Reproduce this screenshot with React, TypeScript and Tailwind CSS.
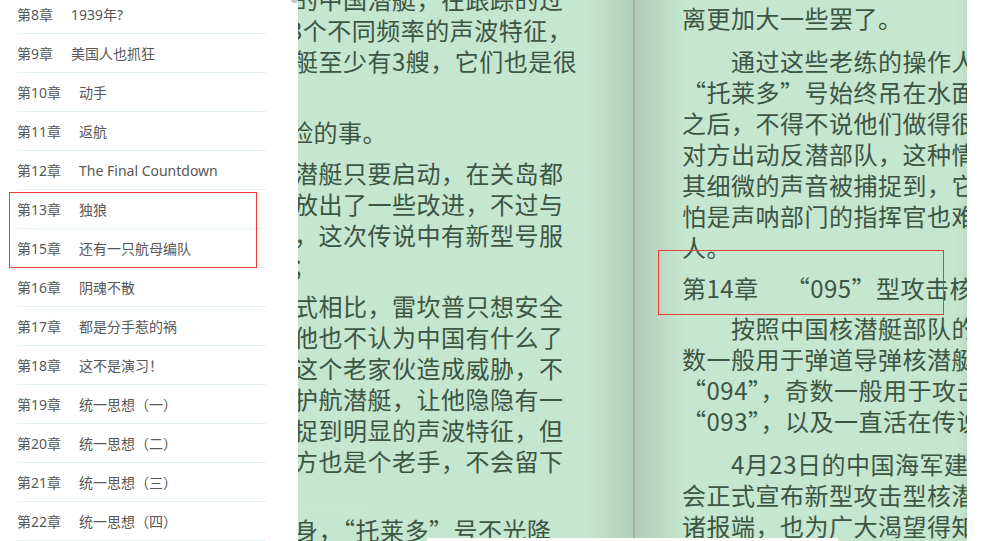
import React from 'react';

const chapters: [string, string][] = [
  ['第8章', '1939年?'],
  ['第9章', '美国人也抓狂'],
  ['第10章', '动手'],
  ['第11章', '返航'],
  ['第12章', 'The Final Countdown'],
  ['第13章', '独狼'],
  ['第15章', '还有一只航母编队'],
  ['第16章', '阴魂不散'],
  ['第17章', '都是分手惹的祸'],
  ['第18章', '这不是演习！'],
  ['第19章', '统一思想（一）'],
  ['第20章', '统一思想（二）'],
  ['第21章', '统一思想（三）'],
  ['第22章', '统一思想（四）'],
];

function Line({ children, className = '' }: { children: React.ReactNode; className?: string }) {
  return <div className={`h-[31px] leading-[31px] whitespace-nowrap ${className}`}>{children}</div>;
}

function Toc() {
  return (
    <aside className="relative w-[298px] shrink-0 h-full bg-white overflow-hidden font-['Noto_Sans','Noto_Sans_CJK_SC',sans-serif]">
      {/* scrollbar thumb end */}
      <div className="absolute right-0 top-[-20px] w-[7px] h-[23px] rounded-full bg-[#c4c4c4]" />
      <ul className="ml-[17px] w-[249px] mt-[-5px]">
        {chapters.map(([no, title]) => (
          <li
            key={no}
            className="h-[39px] flex items-center border-b border-[#e2f2f2] text-[14px] text-[#585858]"
          >
            <span>{no}</span>
            <span className="ml-[18px]">{title}</span>
          </li>
        ))}
      </ul>
    </aside>
  );
}

function LeftPage() {
  return (
    <section className="w-[335px] shrink-0 h-full overflow-hidden bg-linear-to-r from-[#c5e6cf] from-86% to-[#b4cebc] text-[24px] tracking-[0.5px] text-[#3d5543]">
      <Line className="mt-[-17px] ml-[-4px]">的中国潜艇，在跟踪的过</Line>
      <Line className="ml-[-9px]">3个不同频率的声波特征，</Line>
      <Line className="ml-[-4px]">艇至少有3艘，它们也是很</Line>

      <Line className="mt-[40px] ml-[-9px]">险的事。</Line>

      <Line className="mt-[10px] ml-[-4px]">潜艇只要启动，在关岛都</Line>
      <Line className="ml-[-4px]">放出了一些改进，不过与</Line>
      <Line className="ml-[-4px]">，这次传说中有新型号服</Line>
      <Line className="ml-[-6px]">；</Line>

      <Line className="mt-[9px] ml-[-4px]">式相比，雷坎普只想安全</Line>
      <Line className="ml-[-4px]">他也不认为中国有什么了</Line>
      <Line className="ml-[-4px]">这个老家伙造成威胁，不</Line>
      <Line className="ml-[-4px]">护航潜艇，让他隐隐有一</Line>
      <Line className="ml-[-4px]">捉到明显的声波特征，但</Line>
      <Line className="ml-[-4px]">方也是个老手，不会留下</Line>

      <Line className="mt-[38px] ml-[-4px]">身，“托莱多”号不光降</Line>
    </section>
  );
}

function RightPage() {
  return (
    <section className="w-[332px] shrink-0 h-full overflow-hidden pl-[47px] pt-[2px] bg-linear-to-r from-[#b3cbb9] to-[#c5e6cf] to-15% shadow-[inset_-10px_0_8px_-8px_rgba(60,90,70,0.12)] text-[24px] tracking-[0.5px] text-[#3d5543]">
      <Line>离更加大一些罢了。</Line>

      <div className="mt-[12px]">
        <Line className="pl-[49px]">通过这些老练的操作人员，</Line>
        <Line>“托莱多”号始终吊在水面</Line>
        <Line>之后，不得不说他们做得很</Line>
        <Line>对方出动反潜部队，这种情况</Line>
        <Line>其细微的声音被捕捉到，它</Line>
        <Line>怕是声呐部门的指挥官也难</Line>
        <Line>人。</Line>
      </div>

      <Line className="mt-[10px]">
        第14章<span className="ml-[27px]">“095”型攻击核潜艇</span>
      </Line>

      <div className="mt-[9px]">
        <Line className="pl-[49px]">按照中国核潜艇部队的</Line>
        <Line>数一般用于弹道导弹核潜艇</Line>
        <Line>“094”，奇数一般用于攻击</Line>
        <Line>“093”，以及一直活在传说</Line>
      </div>

      <div className="mt-[12px]">
        <Line className="pl-[49px]">4月23日的中国海军建军</Line>
        <Line>会正式宣布新型攻击型核潜艇</Line>
        <Line>诸报端，也为广大渴望得知</Line>
      </div>
    </section>
  );
}

export default function App() {
  return (
    <div className="relative w-[982px] h-[541px] overflow-hidden bg-white font-['Noto_Sans_CJK_SC',sans-serif]">
      <div className="flex h-full">
        <Toc />
        <LeftPage />
        <div className="w-[2px] shrink-0 h-full bg-[#a9abaa]" />
        <RightPage />
        <div className="flex-1 h-full bg-white" />
      </div>

      {/* bottom scroll strip */}
      <div className="absolute left-[427px] bottom-0 w-[411px] h-[3px] bg-white" />

      {/* annotation boxes */}
      <div className="absolute left-[9px] top-[192px] w-[248px] h-[76px] border border-[#ec3b3b]" />
      <div className="absolute left-[658px] top-[250px] w-[286px] h-[65px] border border-[#ec3b3b]" />
    </div>
  );
}
